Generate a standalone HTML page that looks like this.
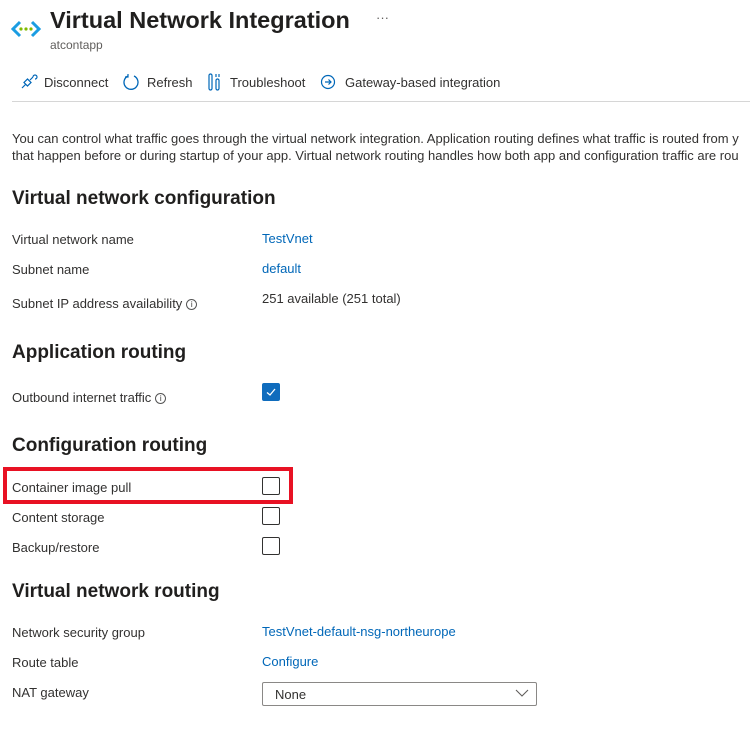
<!DOCTYPE html>
<html><head><style>
body{margin:0;width:750px;height:743px;background:#fff;font-family:"Liberation Sans",sans-serif;color:#323130;position:relative;overflow:hidden}
.a{position:absolute;white-space:nowrap}
.t{font-size:13px}
.h{font-size:19px;font-weight:bold;color:#201f1e}
.l{color:#0067b8;font-size:13px}
.cb{position:absolute;width:16px;height:16px;border:1px solid #323130;border-radius:2px;background:#fff}
.info{display:inline-block;width:9px;height:9px;border:1px solid #555;border-radius:50%;font-size:8px;line-height:9px;text-align:center;margin-left:4px;vertical-align:1px}
</style></head><body>
<svg class="a" style="left:11px;top:19px" width="30" height="20" viewBox="0 0 30 20">
<path d="M9 3 L2 10 L9 17" stroke="#1b9de2" stroke-width="3" fill="none"/>
<path d="M21 3 L28 10 L21 17" stroke="#1b9de2" stroke-width="3" fill="none"/>
<circle cx="10" cy="10" r="1.6" fill="#7fba00"/><circle cx="15" cy="10" r="1.6" fill="#7fba00"/><circle cx="20" cy="10" r="1.6" fill="#7fba00"/></svg>
<div class="a" style="left:50px;top:7px;font-size:23.5px;font-weight:bold;color:#201f1e">Virtual Network Integration</div>
<div class="a" style="left:376px;top:10px;font-size:13px;color:#605e5c">···</div>
<div class="a" style="left:50px;top:38px;font-size:12px;color:#605e5c">atcontapp</div>
<svg class="a" style="left:20px;top:74px" width="18" height="16" viewBox="0 0 18 16"><g stroke="#0067b8" fill="none" stroke-width="1.2"><path d="M2 14 L6 10"/><rect x="5" y="6" width="5" height="5" transform="rotate(-45 7.5 8.5)"/><path d="M10 6 L13 3 M13 3 a2 2 0 1 1 2 2"/></g></svg>
<div class="a t" style="left:44px;top:75px">Disconnect</div>
<svg class="a" style="left:122px;top:73px" width="18" height="18"><path d="M6 3 A7 7 0 1 0 12 3" stroke="#0067b8" stroke-width="1.3" fill="none"/><path d="M6 1 L6 4 L3 4" stroke="#0067b8" stroke-width="1.2" fill="none"/></svg>
<div class="a t" style="left:147px;top:75px">Refresh</div>
<svg class="a" style="left:207px;top:73px" width="14" height="18"><g stroke="#0067b8" stroke-width="1.2" fill="none"><rect x="2" y="1" width="3" height="16" rx="1.5"/><rect x="9" y="6" width="3" height="11" rx="1.5"/><path d="M9 1 v3 M12 1 v3"/></g></svg>
<div class="a t" style="left:230px;top:75px">Troubleshoot</div>
<svg class="a" style="left:320px;top:74px" width="16" height="16"><circle cx="8" cy="8" r="6.5" stroke="#0067b8" stroke-width="1.2" fill="none"/><path d="M5 8 H11 M8.5 5.5 L11 8 L8.5 10.5" stroke="#0067b8" stroke-width="1.2" fill="none"/></svg>
<div class="a t" style="left:345px;top:75px">Gateway-based integration</div>
<div class="a" style="left:12px;top:101px;width:738px;height:1px;background:#d6d6d6"></div>
<div class="a" style="left:12px;top:130px;font-size:13px;line-height:17px">You can control what traffic goes through the virtual network integration. Application routing defines what traffic is routed from y<br>that happen before or during startup of your app. Virtual network routing handles how both app and configuration traffic are rou</div>
<div class="a h" style="left:12px;top:188px">Virtual network configuration</div>
<div class="a t" style="left:12px;top:232px">Virtual network name</div><div class="a l" style="left:262px;top:231px">TestVnet</div>
<div class="a t" style="left:12px;top:262px">Subnet name</div><div class="a l" style="left:262px;top:261px">default</div>
<div class="a t" style="left:12px;top:296px">Subnet IP address availability<span class="info">i</span></div><div class="a t" style="left:262px;top:291px">251 available (251 total)</div>
<div class="a h" style="left:12px;top:342px">Application routing</div>
<div class="a t" style="left:12px;top:390px">Outbound internet traffic<span class="info">i</span></div>
<div class="cb" style="left:262px;top:383px;background:#0f6cbd;border-color:#0f6cbd"><svg width="16" height="16"><path d="M4 8.5 L7 11 L12 5" stroke="#fff" stroke-width="1.3" fill="none"/></svg></div>
<div class="a h" style="left:12px;top:435px">Configuration routing</div>
<div class="a" style="left:3px;top:467px;width:282px;height:29px;border:4px solid #e81123"></div>
<div class="a t" style="left:12px;top:480px">Container image pull</div><div class="cb" style="left:262px;top:477px"></div>
<div class="a t" style="left:12px;top:510px">Content storage</div><div class="cb" style="left:262px;top:507px"></div>
<div class="a t" style="left:12px;top:540px">Backup/restore</div><div class="cb" style="left:262px;top:537px"></div>
<div class="a h" style="left:12px;top:581px">Virtual network routing</div>
<div class="a t" style="left:12px;top:625px">Network security group</div><div class="l a" style="left:262px;top:624px">TestVnet-default-nsg-northeurope</div>
<div class="a t" style="left:12px;top:655px">Route table</div><div class="l a" style="left:262px;top:654px">Configure</div>
<div class="a t" style="left:12px;top:685px">NAT gateway</div>
<div class="a" style="left:262px;top:682px;width:273px;height:22px;border:1px solid #8a8886;border-radius:2px"></div>
<div class="a t" style="left:275px;top:687px">None</div>
<svg class="a" style="left:515px;top:688px" width="14" height="10"><path d="M1 2 L7 8 L13 2" stroke="#605e5c" stroke-width="1.1" fill="none"/></svg>
</body></html>
